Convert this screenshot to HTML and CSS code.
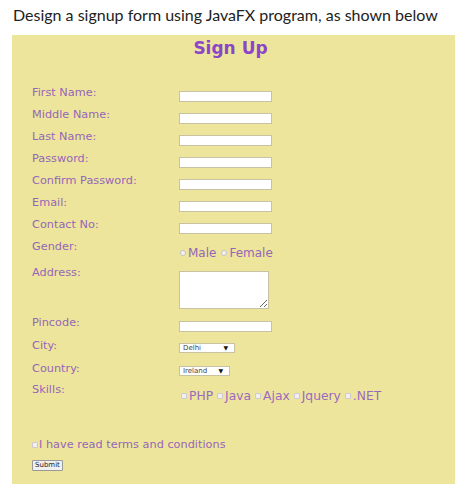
FILE: index.html
```html
<!DOCTYPE html>
<html lang="en">
<head>
  <meta charset="UTF-8" />
  <title>Sign Up</title>
  <link rel="stylesheet" href="styles.css">
</head>
<body>
  <p class="intro">Design a signup form using JavaFX program, as shown below</p>

  <form class="signup">
    <h1>Sign Up</h1>

    <div class="row"><label>First Name:</label><input type="text"></div>
    <div class="row"><label>Middle Name:</label><input type="text"></div>
    <div class="row"><label>Last Name:</label><input type="text"></div>
    <div class="row"><label>Password:</label><input type="password"></div>
    <div class="row"><label>Confirm Password:</label><input type="password"></div>
    <div class="row"><label>Email:</label><input type="text"></div>
    <div class="row"><label>Contact No:</label><input type="text"></div>

    <div class="row gender">
      <label>Gender:</label>
      <div class="choices">
        <span class="opt"><span class="radio"></span>Male</span>
        <span class="opt"><span class="radio"></span>Female</span>
      </div>
    </div>

    <div class="row address"><label>Address:</label><textarea></textarea></div>
    <div class="row pin"><label>Pincode:</label><input type="text"></div>

    <div class="row city">
      <label>City:</label>
      <span class="dropdown city-box">Delhi</span>
    </div>
    <div class="row country">
      <label>Country:</label>
      <span class="dropdown country-box">Ireland</span>
    </div>

    <div class="row skills">
      <label>Skills:</label>
      <div class="choices">
        <span class="opt"><span class="check"></span>PHP</span>
        <span class="opt"><span class="check"></span>Java</span>
        <span class="opt"><span class="check"></span>Ajax</span>
        <span class="opt"><span class="check"></span>Jquery</span>
        <span class="opt"><span class="check"></span>.NET</span>
      </div>
    </div>

    <div class="terms"><span class="check"></span>I have read terms and conditions</div>
    <button type="button" class="submit">Submit</button>
  </form>
</body>
</html>
```

FILE: styles.css
```css
body {
  margin: 0;
  background: #fff;
  font-family: "DejaVu Sans", Verdana, sans-serif;
}
.intro {
  margin: 0 0 11px;
  padding: 6px 13px 0;
  font: 16px/18px Lato, "Open Sans", sans-serif;
  color: #222;
}
/* form box */
.signup {
  box-sizing: border-box;
  width: 443px;
  height: 449px;
  margin-left: 12px;
  padding: 2px 0 0 20px;
  background: #eee59c;
  color: #9565b8;
  font-size: 11.3px;
  line-height: 13px;
}
.signup h1 {
  margin: 0 0 26px -26px;
  font-size: 17px;
  line-height: 22px;
  text-align: center;
  color: #8c44c8;
}
/* rows */
.row {
  display: flex;
  align-items: flex-start;
  height: 22px;
}
.row label { width: 147px; flex: none; padding-top: 1px; }
.row input {
  box-sizing: border-box;
  width: 93px;
  height: 11px;
  margin-top: 6px;
  padding: 0;
  border: 1px solid #c9c1a4;
  background: #fff;
}
.gender { height: 26px; }
.address { height: 50px; }
.pin { height: 23px; }
.city { height: 23px; }
.country { height: 21px; }
.skills { height: 52px; }
textarea {
  box-sizing: border-box;
  width: 90px;
  height: 38px;
  margin-top: 6px;
  padding: 0;
  border: 1px solid #c9c1a4;
  background: #fff;
  resize: both;
}
/* radios and checkboxes */
.choices {
  display: flex;
  gap: 5px;
  margin-top: 8px;
  font-size: 12px;
  line-height: 14px;
}
.gender .choices { margin-top: 7px; margin-left: 1px; }
.skills .choices { margin-top: 7px; margin-left: 2px; gap: 4px; font-size: 12.3px; color: #9a6ac0; }
.opt { display: flex; align-items: center; gap: 2px; }
.radio {
  width: 4px; height: 4px;
  border: 1px solid #c4bfc8;
  border-radius: 50%;
  background: #f4f2f4;
}
.check {
  width: 4px; height: 4px;
  border: 1px solid #cfcad0;
  border-radius: 1px;
  background: #f1eff1;
}
/* selects */
.dropdown {
  position: relative;
  box-sizing: border-box;
  height: 10px;
  margin-top: 5px;
  padding-left: 3px;
  border: 1px solid #c9c1a4;
  background: #fff;
  color: #444;
  font-size: 7px;
  line-height: 8px;
}
.dropdown::after {
  content: "\25BC";
  position: absolute;
  right: 6px; top: 0;
  font-size: 6px;
  color: #111;
}
.city-box { width: 56px; }
.country-box { width: 51px; }
/* bottom */
.terms {
  display: flex;
  align-items: center;
  gap: 1px;
  height: 22px;
  font-size: 11.3px;
  line-height: 14px;
}
.submit {
  margin-top: 4px;
  padding: 0 2px;
  height: 11px;
  font: 7px/9px "DejaVu Sans", sans-serif;
  color: #222;
  background: #f0f0f0;
  border: 1px solid #999;
  border-radius: 1px;
}
```
